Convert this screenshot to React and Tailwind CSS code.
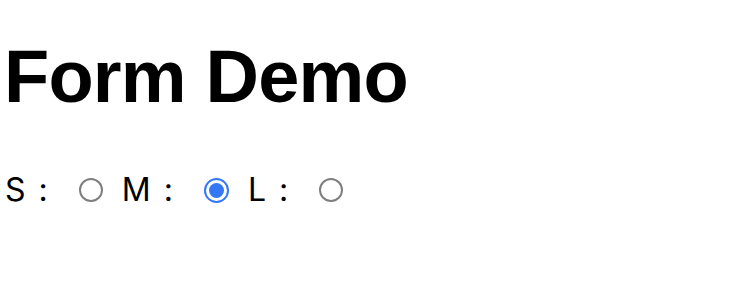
import { useState } from 'react';

const SIZES = ['S', 'M', 'L'];

function Radio({ checked, onClick }) {
  return (
    <button
      type="button"
      role="radio"
      aria-checked={checked}
      onClick={onClick}
      className={
        checked
          ? 'w-[25px] h-[25px] rounded-full border-2 border-[#3478f6] flex items-center justify-center'
          : 'w-[24px] h-[24px] rounded-full border-2 border-[#7f7f7f] flex items-center justify-center'
      }
    >
      {checked && <span className="w-[15px] h-[15px] rounded-full bg-[#3478f6]" />}
    </button>
  );
}

export default function App() {
  const [size, setSize] = useState('M');

  return (
    <div className="w-[750px] h-[300px] bg-white text-black font-['Liberation_Sans',Arial,sans-serif]">
      <h1 className="pl-[4px] pt-[40px] text-[74px] font-bold leading-none tracking-[-0.8px]">Form Demo</h1>
      <div className="flex items-center pl-[5px] mt-[60px] text-[32px] leading-none font-['Inter','Liberation_Sans',sans-serif]">
        {SIZES.map(s => (
          <label key={s} className="flex items-center mr-[19px]">
            <span>{s}</span>
            <span className="ml-[13px]">:</span>
            <span className="ml-[31px] flex items-center">
              <Radio checked={size === s} onClick={() => setSize(s)} />
            </span>
          </label>
        ))}
      </div>
    </div>
  );
}
